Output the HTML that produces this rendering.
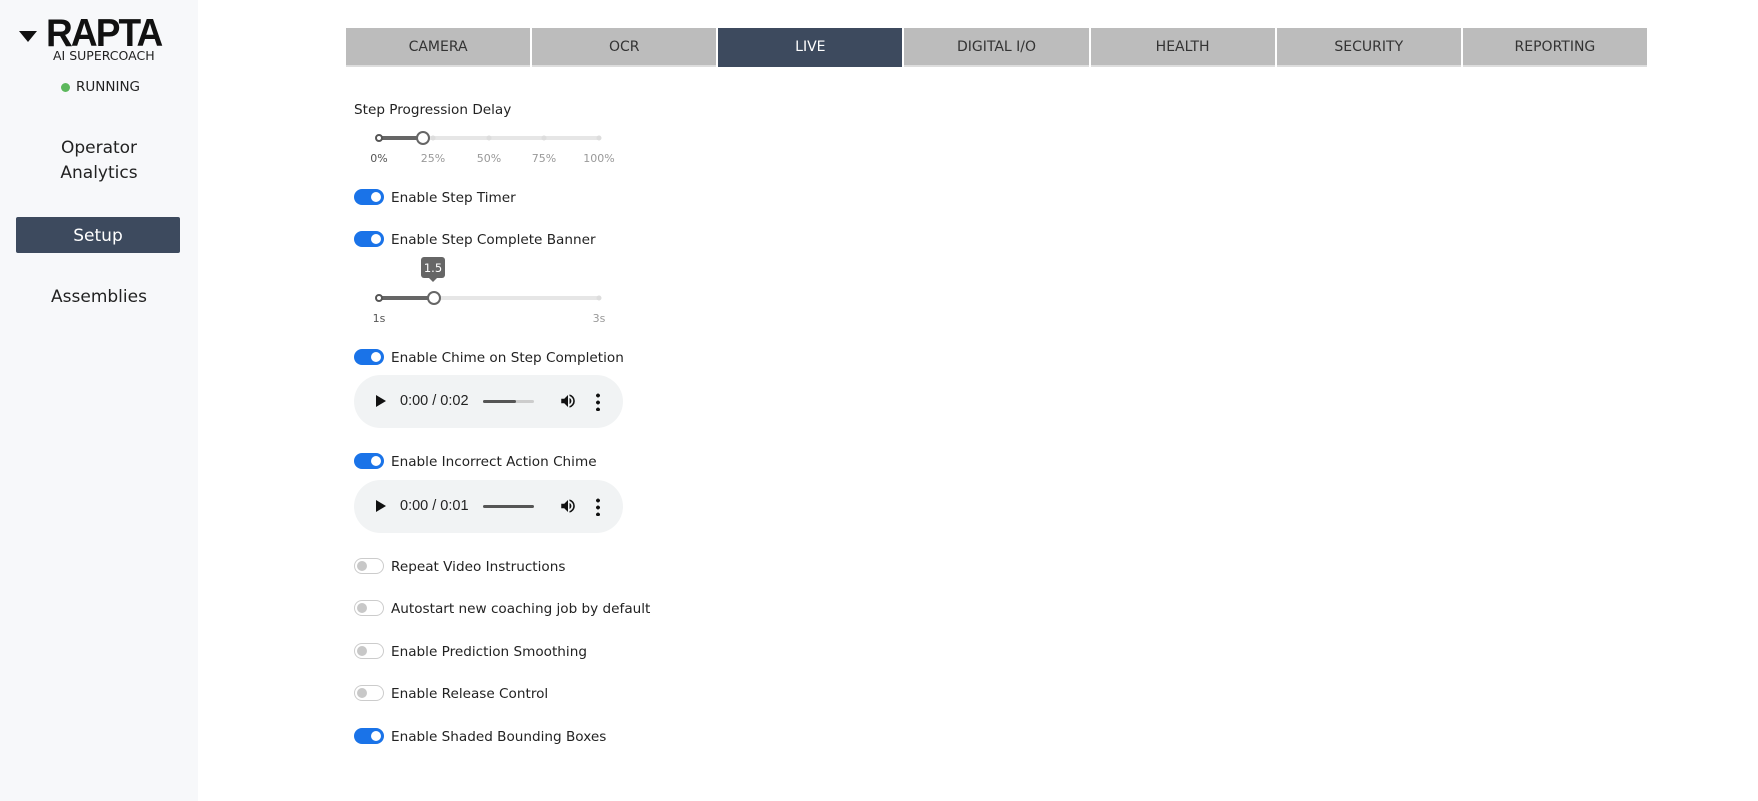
<!DOCTYPE html>
<html><head><meta charset="utf-8"><style>
*{box-sizing:border-box;margin:0;padding:0}
body{width:1758px;height:801px;background:#fff;font-family:"DejaVu Sans","Liberation Sans",sans-serif;color:#222;position:relative;overflow:hidden}
.side{position:absolute;left:0;top:0;width:198px;height:801px;background:#f7f8fa}
.abs{position:absolute}
.tabs{position:absolute;left:346px;top:28px;width:1301px;height:39px;display:flex;gap:2px}
.tab{flex:1;background:#bcbcbc;color:#333;font-size:14px;display:flex;align-items:center;justify-content:center;border-bottom:2px solid #ddd}
.tab.on{background:#3d4a5e;color:#fff;border-bottom-color:#3d4a5e}
.lbl{position:absolute;left:391px;font-size:13.6px;color:#222;transform:translateY(-50%);margin-top:2px}
.tg{position:absolute;left:354px;width:30px;height:16px;border-radius:8px;transform:translateY(-50%)}
.tg.on{background:#1a73e8}
.tg.on::after{content:"";position:absolute;right:3px;top:3px;width:10px;height:10px;border-radius:50%;background:#fff}
.tg.off{background:#fff;border:1px solid #ccc}
.tg.off::after{content:"";position:absolute;left:2px;top:2px;width:10px;height:10px;border-radius:50%;background:#c8c8c8}
.track{position:absolute;height:4px;background:#e6e6e6;border-radius:2px}
.sm{position:absolute;font-size:11px;color:#999;transform:translateX(-50%)}
.audio{position:absolute;left:354px;width:269px;height:53px;background:#f1f3f4;border-radius:27px}
.dot{position:absolute;width:5px;height:5px;border-radius:50%;background:#ddd;transform:translate(-50%,-50%)}
</style></head><body>
<div class="side">
  <div class="abs" style="left:19px;top:31px;width:0;height:0;border-left:9px solid transparent;border-right:9px solid transparent;border-top:11px solid #111"></div>
  <div class="abs" style="left:46px;top:12px;font-family:'Liberation Sans';font-weight:bold;font-size:39px;letter-spacing:-2px;color:#111;transform:scaleX(0.95);transform-origin:left">RAPTA</div>
  <div class="abs" style="left:53px;top:48px;font-size:12.5px;color:#222">AI SUPERCOACH</div>
  <div class="abs" style="left:61px;top:83px;width:9px;height:9px;border-radius:50%;background:#5cb85c"></div>
  <div class="abs" style="left:76px;top:79px;font-size:13.5px;color:#222">RUNNING</div>
  <div class="abs" style="left:0;width:198px;top:136px;text-align:center;font-size:17px;line-height:25px">Operator<br>Analytics</div>
  <div class="abs" style="left:16px;top:217px;width:164px;height:36px;background:#3d4a5e;border-radius:2px;color:#fff;font-size:17px;display:flex;align-items:center;justify-content:center;padding-top:2px">Setup</div>
  <div class="abs" style="left:0;width:198px;top:287px;text-align:center;font-size:17px">Assemblies</div>
</div>
<div class="tabs"><div class="tab">CAMERA</div><div class="tab">OCR</div><div class="tab on">LIVE</div><div class="tab">DIGITAL I/O</div><div class="tab">HEALTH</div><div class="tab">SECURITY</div><div class="tab">REPORTING</div></div>

<div class="abs" style="left:354px;top:102px;font-size:13.6px">Step Progression Delay</div>
<div class="track" style="left:379px;top:136px;width:220px"></div>
<div class="abs" style="left:379px;top:136px;width:44px;height:4px;background:#666"></div>
<div class="dot" style="left:489px;top:138px"></div><div class="dot" style="left:544px;top:138px"></div><div class="dot" style="left:599px;top:138px"></div><div class="dot" style="left:433px;top:138px"></div>
<div class="abs" style="left:375px;top:134px;width:8px;height:8px;border-radius:50%;border:2px solid #555;background:#fff"></div>
<div class="abs" style="left:416px;top:131px;width:14px;height:14px;border-radius:50%;border:2px solid #666;background:#fff"></div>
<div class="sm" style="left:379px;top:152px;color:#555">0%</div><div class="sm" style="left:433px;top:152px">25%</div><div class="sm" style="left:489px;top:152px">50%</div><div class="sm" style="left:544px;top:152px">75%</div><div class="sm" style="left:599px;top:152px">100%</div>

<div class="tg on" style="top:197px"></div><div class="lbl" style="top:196px">Enable Step Timer</div>
<div class="tg on" style="top:239px"></div><div class="lbl" style="top:238px">Enable Step Complete Banner</div>

<div class="abs" style="left:421px;top:257px;width:24px;height:21px;background:#666;border-radius:3px;color:#fff;font-size:11.5px;display:flex;align-items:center;justify-content:center">1.5</div>
<div class="abs" style="left:429px;top:278px;border-left:4px solid transparent;border-right:4px solid transparent;border-top:4px solid #666"></div>
<div class="track" style="left:379px;top:296px;width:220px"></div>
<div class="abs" style="left:379px;top:296px;width:55px;height:4px;background:#666"></div>
<div class="dot" style="left:599px;top:298px"></div>
<div class="abs" style="left:375px;top:294px;width:8px;height:8px;border-radius:50%;border:2px solid #555;background:#fff"></div>
<div class="abs" style="left:427px;top:291px;width:14px;height:14px;border-radius:50%;border:2px solid #666;background:#fff"></div>
<div class="sm" style="left:379px;top:312px;color:#555">1s</div><div class="sm" style="left:599px;top:312px">3s</div>

<div class="tg on" style="top:357px"></div><div class="lbl" style="top:356px">Enable Chime on Step Completion</div>
<div class="audio" style="top:375px">
  <div class="abs" style="left:22px;top:20px;border-top:6px solid transparent;border-bottom:6px solid transparent;border-left:10px solid #111"></div>
  <div class="abs" style="left:46px;top:18px;font-family:'Liberation Sans';font-size:14.5px;color:#222">0:00 / 0:02</div>
  <div class="abs" style="left:129px;top:25px;width:51px;height:3px;background:#ccc;border-radius:2px"></div>
  <div class="abs" style="left:129px;top:25px;width:33px;height:3px;background:#555;border-radius:2px"></div>
  <svg class="abs" style="left:205px;top:17px" width="18" height="18" viewBox="0 0 24 24"><path d="M3 9v6h4l5 5V4L7 9H3zm13.5 3A4.5 4.5 0 0 0 14 8v8a4.5 4.5 0 0 0 2.5-4zM14 3.2v2.1a7 7 0 0 1 0 13.4v2.1a9 9 0 0 0 0-17.6z" fill="#111"/></svg>
  <div class="abs" style="left:242px;top:17px;width:4px;height:19px;background:radial-gradient(circle,#111 1.8px,transparent 2px) 0 0/4px 7px"></div>
</div>

<div class="tg on" style="top:461px"></div><div class="lbl" style="top:460px">Enable Incorrect Action Chime</div>
<div class="audio" style="top:480px">
  <div class="abs" style="left:22px;top:20px;border-top:6px solid transparent;border-bottom:6px solid transparent;border-left:10px solid #111"></div>
  <div class="abs" style="left:46px;top:18px;font-family:'Liberation Sans';font-size:14.5px;color:#222">0:00 / 0:01</div>
  <div class="abs" style="left:129px;top:25px;width:51px;height:3px;background:#555;border-radius:2px"></div>
  <svg class="abs" style="left:205px;top:17px" width="18" height="18" viewBox="0 0 24 24"><path d="M3 9v6h4l5 5V4L7 9H3zm13.5 3A4.5 4.5 0 0 0 14 8v8a4.5 4.5 0 0 0 2.5-4zM14 3.2v2.1a7 7 0 0 1 0 13.4v2.1a9 9 0 0 0 0-17.6z" fill="#111"/></svg>
  <div class="abs" style="left:242px;top:17px;width:4px;height:19px;background:radial-gradient(circle,#111 1.8px,transparent 2px) 0 0/4px 7px"></div>
</div>

<div class="tg off" style="top:566px"></div><div class="lbl" style="top:565px">Repeat Video Instructions</div>
<div class="tg off" style="top:608px"></div><div class="lbl" style="top:607px">Autostart new coaching job by default</div>
<div class="tg off" style="top:651px"></div><div class="lbl" style="top:650px">Enable Prediction Smoothing</div>
<div class="tg off" style="top:693px"></div><div class="lbl" style="top:692px">Enable Release Control</div>
<div class="tg on" style="top:736px"></div><div class="lbl" style="top:735px">Enable Shaded Bounding Boxes</div>
</body></html>
